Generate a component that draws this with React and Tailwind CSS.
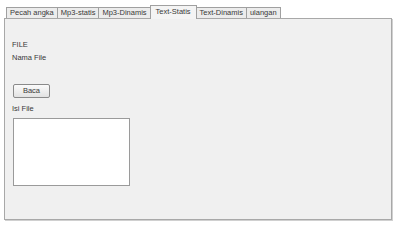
import React from 'react';

const TABS = ['Pecah angka', 'Mp3-statis', 'Mp3-Dinamis', 'Text-Statis', 'Text-Dinamis', 'ulangan'];
const ACTIVE = 'Text-Statis';

export default function App() {
  return (
    <div
      className="w-[400px] h-[225px] bg-white pl-[4px] pt-[5px] text-[7.5px] text-[#383838]"
      style={{ fontFamily: '"Liberation Sans", Arial, sans-serif' }}
    >
      {/* TABS */}
      <div className="flex items-end h-[13px] pl-[2px]">
        {TABS.map((t) => {
          const active = t === ACTIVE;
          return (
            <div
              key={t}
              className={`border border-b-0 border-[#a0a0a0] leading-none flex items-center -ml-px first:ml-0 ${
                active ? 'h-[14px] bg-[#f4f4f4] relative z-10 pb-[2px] mb-[-1px] px-[5px]' : 'h-[11px] bg-[#ececec] px-[3px]'
              }`}
            >
              {t}
            </div>
          );
        })}
      </div>

      {/* PANEL */}
      <div className="w-[388px] h-[202px] bg-[#f0f0f0] border border-[#a8a8a8] shadow-[1px_1px_0_#d0d0d0] pl-[7px] pt-[22px] flex flex-col">
        <div className="leading-none">FILE</div>
        <div className="leading-none mt-[5px]">Nama File</div>
        <button className="mt-[23px] ml-[1px] w-[37px] h-[14px] border border-[#8a8a8a] rounded-[2px] bg-gradient-to-b from-[#fbfbfb] to-[#e2e2e2] leading-none text-[7.5px] text-[#383838]">
          Baca
        </button>
        <div className="leading-none mt-[7px]">Isi File</div>
        <div className="mt-[5px] ml-[1px] w-[117px] h-[68px] bg-white border border-[#9a9a9a]" />
      </div>
    </div>
  );
}
